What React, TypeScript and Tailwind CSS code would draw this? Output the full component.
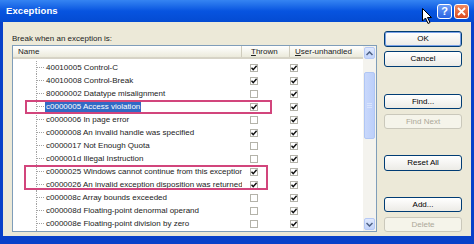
import React from "react";

type Row = { code: string; text: string; thrown: boolean; selected?: boolean };

const rows: Row[] = [
  { code: "40010005", text: "Control-C", thrown: true },
  { code: "40010008", text: "Control-Break", thrown: true },
  { code: "80000002", text: "Datatype misalignment", thrown: false },
  { code: "c0000005", text: "Access violation", thrown: true, selected: true },
  { code: "c0000006", text: "In page error", thrown: false },
  { code: "c0000008", text: "An invalid handle was specified", thrown: true },
  { code: "c0000017", text: "Not Enough Quota", thrown: false },
  { code: "c000001d", text: "Illegal Instruction", thrown: false },
  { code: "c0000025", text: "Windows cannot continue from this exception", thrown: true },
  { code: "c0000026", text: "An invalid exception disposition was returned", thrown: true },
  { code: "c000008c", text: "Array bounds exceeded", thrown: false },
  { code: "c000008d", text: "Floating-point denormal operand", thrown: false },
  { code: "c000008e", text: "Floating-point division by zero", thrown: false },
  // last row is cut by the bottom of the list, only the boxes peek through
  { code: "", text: "", thrown: false },
];

function Check({ on }: { on: boolean }) {
  return (
    <div className="w-[8px] h-[8px] border border-[#b4b3aa] bg-white flex items-center justify-center">
      {on && (
        <svg width="6" height="6" viewBox="0 0 6 6">
          <path d="M0.5 2.8 L2.2 4.6 L5.6 0.8" stroke="#111" strokeWidth="1.4" fill="none" />
        </svg>
      )}
    </div>
  );
}

function XpButton({ label, disabled, isDefault, className }: { label: string; disabled?: boolean; isDefault?: boolean; className?: string }) {
  return (
    <div
      className={
        "w-[78px] flex items-center justify-center rounded-[3px] border text-[8px] " +
        (disabled
          ? "border-[#cac8bb] bg-[#f5f4ea] text-[#aca899] "
          : isDefault
          ? "border-[#003c74] bg-gradient-to-b from-white to-[#ecebe6] text-black shadow-[inset_0_0_0_1px_#7ba2e7] "
          : "border-[#003c74] bg-gradient-to-b from-white to-[#ecebe6] text-black ") +
        (className || "")
      }
    >
      {label}
    </div>
  );
}

export default function App() {
  return (
    <div
      className="relative w-[474px] h-[244px] overflow-hidden bg-[#0841c9] flex flex-col"
      style={{ fontFamily: '"Liberation Sans", Arial, sans-serif' }}
    >
      {/* Title bar */}
      <div className="h-[22px] shrink-0 flex items-center pl-[6px] pr-[5px] bg-gradient-to-b from-[#3584f2] via-[#0754e0] to-[#044bd2]">
        <span className="text-white font-bold text-[9.5px] tracking-[0.1px]">Exceptions</span>
        <div className="ml-auto flex gap-[2px] mt-[1px]">
          <div className="w-[15px] h-[15px] rounded-[3px] border border-white bg-gradient-to-b from-[#6b9cf7] to-[#2a63e3] flex items-center justify-center text-white font-bold text-[11px] leading-none">
            ?
          </div>
          <div className="w-[15px] h-[15px] rounded-[3px] border border-white bg-gradient-to-b from-[#f0895f] to-[#d9481c] flex items-center justify-center">
            <svg width="9" height="9" viewBox="0 0 9 9">
              <path d="M1 1 L8 8 M8 1 L1 8" stroke="white" strokeWidth="1.8" />
            </svg>
          </div>
        </div>
      </div>

      {/* Body */}
      <div className="flex-1 mx-[3px] mb-[8px] bg-[#ece9d8] flex text-[8px] text-black">
        {/* Left side */}
        <div className="pl-[9px] pt-[12px] flex flex-col">
          <div className="h-[10px] leading-[10px] text-[#222]">Break when an exception is:</div>
          <div className="mt-[1px] w-[365px] h-[187px] border border-[#7f9db9] bg-white flex overflow-hidden">
            <div className="flex-1 flex flex-col overflow-hidden">
              {/* Header */}
              <div className="h-[13px] shrink-0 flex bg-gradient-to-b from-white to-[#ebeadb] border-b-2 border-[#d6d3c6] text-[#222]">
                <div className="w-[229px] pl-[5px] flex items-center border-r border-[#cfccbd]">Name</div>
                <div className="w-[48px] pl-[9px] flex items-center border-r border-[#cfccbd]">
                  <span><span className="underline">T</span>hrown</span>
                </div>
                <div className="flex-1 pl-[5px] flex items-center">
                  <span><span className="underline">U</span>ser-unhandled</span>
                </div>
              </div>
              {/* Rows */}
              <div className="mt-[2px] flex flex-col">
                {rows.map((r, i) => (
                  <div key={i} className="h-[13px] shrink-0 flex items-center">
                    <div className="w-[229px] h-full flex items-center whitespace-nowrap overflow-hidden">
                      <div className="w-[23px] shrink-0" />
                      <div className="w-[8px] h-full shrink-0 border-l border-dotted border-[#a3a3a3]">
                        {r.code && <div className="h-1/2 border-b border-dotted border-[#a3a3a3]" />}
                      </div>
                      {r.code && (
                        <span
                          className={
                            "ml-[1px] px-[1px] leading-[11px] " +
                            (r.selected ? "bg-[#316ac5] text-white" : "text-[#222]")
                          }
                        >
                          {r.code} {r.text}
                        </span>
                      )}
                    </div>
                    <div className="w-[48px] pl-[8px]">
                      <Check on={r.thrown} />
                    </div>
                    <div className="flex-1">
                      <Check on={r.code !== ""} />
                    </div>
                  </div>
                ))}
              </div>
            </div>
            {/* Scrollbar */}
            <div className="w-[13px] shrink-0 flex flex-col bg-[#f4f3ee] pt-[1px]">
              <div className="h-[12px] mx-[1px] rounded-[2px] bg-gradient-to-b from-[#e0e9fd] to-[#c2d3fa] border border-[#b6c9f5] flex items-center justify-center">
                <svg width="7" height="5" viewBox="0 0 7 5">
                  <path d="M0.5 4 L3.5 1 L6.5 4" stroke="#4d6185" strokeWidth="1.5" fill="none" />
                </svg>
              </div>
              <div className="h-[13px]" />
              <div className="h-[67px] mx-[1px] rounded-[2px] bg-gradient-to-r from-[#c9d8fb] to-[#bccffa] border border-[#b0c6f4] flex items-center justify-center">
                <div className="w-[5px] flex flex-col gap-[1px]">
                  <div className="h-px bg-[#d9e4fd]" />
                  <div className="h-px bg-[#d9e4fd]" />
                  <div className="h-px bg-[#d9e4fd]" />
                </div>
              </div>
              <div className="flex-1" />
              <div className="h-[12px] mx-[1px] mb-[1px] rounded-[2px] bg-gradient-to-b from-[#e0e9fd] to-[#c2d3fa] border border-[#b6c9f5] flex items-center justify-center">
                <svg width="7" height="5" viewBox="0 0 7 5">
                  <path d="M0.5 1 L3.5 4 L6.5 1" stroke="#4d6185" strokeWidth="1.5" fill="none" />
                </svg>
              </div>
            </div>
          </div>
        </div>

        {/* Right side buttons */}
        <div className="ml-[7px] pt-[9px] flex flex-col">
          <XpButton label="OK" isDefault className="h-[16px]" />
          <XpButton label="Cancel" className="h-[16px] mt-[4px]" />
          <XpButton label="Find..." className="h-[15px] mt-[27px]" />
          <XpButton label="Find Next" disabled className="h-[15px] mt-[5px]" />
          <XpButton label="Reset All" className="h-[16px] mt-[26px]" />
          <XpButton label="Add..." className="h-[15px] mt-[26px]" />
          <XpButton label="Delete" disabled className="h-[15px] mt-[5px]" />
        </div>
      </div>

      {/* Highlight boxes drawn over the list */}
      <div className="absolute left-[25px] top-[100px] w-[247px] h-[14px] border-2 border-[#d2457c]" />
      <div className="absolute left-[24px] top-[165px] w-[244px] h-[25px] border-2 border-[#d2457c]" />

      {/* Mouse pointer */}
      <svg className="absolute left-[422px] top-[8px]" width="11" height="17" viewBox="0 0 11 17">
        <path d="M0.5 0.5 L0.5 13 L3.5 10 L6 15.5 L8 14.5 L5.5 9.5 L9.5 9.5 Z" fill="white" stroke="black" strokeWidth="1" />
      </svg>
    </div>
  );
}
